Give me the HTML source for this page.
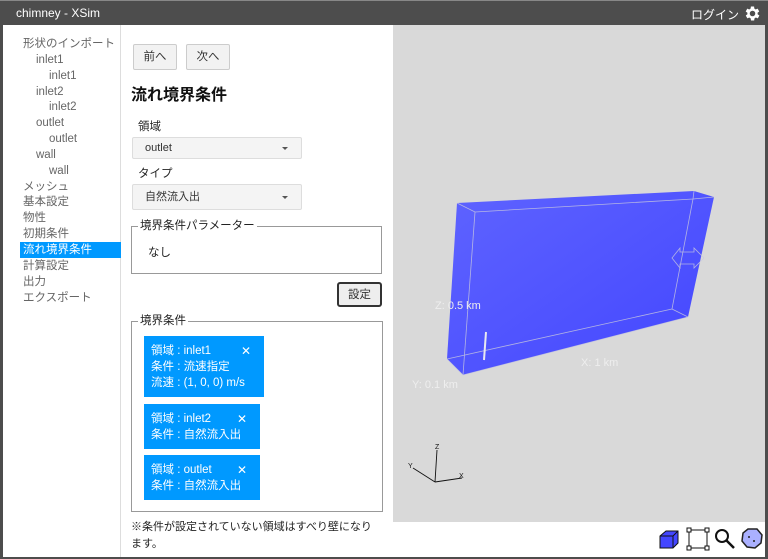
<!DOCTYPE html>
<html><head><meta charset="utf-8"><style>
*{margin:0;padding:0;box-sizing:border-box}
body{width:768px;height:559px;overflow:hidden;background:#4d4d4d;font-family:"Liberation Sans","Noto Sans CJK JP",sans-serif;position:relative}
.a{position:absolute}
#title{left:0;top:0;width:768px;height:25px;background:#4d4d4d;border-top:1px solid #888;color:#fff;font-size:12px}
#side{left:3px;top:25px;width:118px;height:532px;background:#fff;border-right:1px solid #ddd;font-size:11.5px;color:#666}
#side div{position:absolute;white-space:nowrap;height:16px;line-height:16px}
#main{left:121px;top:25px;width:272px;height:532px;background:#fff;font-size:11.5px;color:#222}
.btn{position:absolute;background:#f2f2f2;border:1px solid #ccc;border-radius:2px;text-align:center;font-size:11.5px;color:#333}
.sel{position:absolute;left:11px;width:170px;background:#f4f4f4;border:1px solid #ddd;border-radius:2px;font-size:11px;color:#333;padding-left:12px}
.sel:after{content:"";position:absolute;right:13px;top:50%;margin-top:-1px;border:3px solid transparent;border-top-color:#555}
.fs{position:absolute;border:1px solid #999}
.lg{position:absolute;left:6px;top:-9px;background:#fff;padding:0 2px;font-size:11.5px;color:#222;line-height:16px}
.card{position:absolute;left:23px;background:#0099ff;color:#fff;font-size:11.5px;line-height:16px;padding:7px 0 0 7px}
.card .x{position:absolute;right:13px;top:7px;font-size:12px}
#view{left:393px;top:25px;width:372px;height:497px;background:#d9d9d9}
#bar{left:393px;top:522px;width:372px;height:35px;background:#fff}
</style></head><body>
<div id="title" class="a"><span class="a" style="left:16px;top:5px">chimney - XSim</span>
<span class="a" style="left:691px;top:5px;font-size:12px">ログイン</span>
<svg class="a" style="left:743px;top:3px" width="19" height="19" viewBox="0 0 24 24"><path fill="#fff" d="M19.4 13a7.5 7.5 0 000-2l2.1-1.6-2-3.5-2.5 1a7 7 0 00-1.7-1L15 3.2h-4l-.4 2.7a7 7 0 00-1.7 1l-2.5-1-2 3.5L6.6 11a7.5 7.5 0 000 2l-2.1 1.6 2 3.5 2.5-1a7 7 0 001.7 1l.4 2.7h4l.4-2.7a7 7 0 001.7-1l2.5 1 2-3.5zM13 15.5a3.5 3.5 0 110-7 3.5 3.5 0 010 7z" transform="translate(-1 0)"/></svg></div>
<div id="side" class="a">
<div style="left:20px;top:11px">形状のインポート</div>
<div style="left:33px;top:27px">inlet1</div>
<div style="left:46px;top:43px">inlet1</div>
<div style="left:33px;top:59px">inlet2</div>
<div style="left:46px;top:74px">inlet2</div>
<div style="left:33px;top:90px">outlet</div>
<div style="left:46px;top:106px">outlet</div>
<div style="left:33px;top:122px">wall</div>
<div style="left:46px;top:138px">wall</div>
<div style="left:20px;top:154px">メッシュ</div>
<div style="left:20px;top:169px">基本設定</div>
<div style="left:20px;top:185px">物性</div>
<div style="left:20px;top:201px">初期条件</div>
<div style="left:17px;top:217px;width:101px;background:#0099ff;color:#fff;padding-left:3px">流れ境界条件</div>
<div style="left:20px;top:233px">計算設定</div>
<div style="left:20px;top:249px">出力</div>
<div style="left:20px;top:265px">エクスポート</div>
</div>
<div id="main" class="a">
<div class="btn" style="left:12px;top:19px;width:44px;height:26px;line-height:24px">前へ</div>
<div class="btn" style="left:65px;top:19px;width:44px;height:26px;line-height:24px">次へ</div>
<div class="a" style="left:10px;top:56px;font-size:16px;font-weight:bold;color:#111">流れ境界条件</div>
<div class="a" style="left:17px;top:93px">領域</div>
<div class="sel" style="top:112px;height:22px;line-height:20px">outlet</div>
<div class="a" style="left:17px;top:140px">タイプ</div>
<div class="sel" style="top:159px;height:26px;line-height:24px">自然流入出</div>
<div class="fs" style="left:10px;top:201px;width:251px;height:48px"><div class="lg">境界条件パラメーター</div>
<div class="a" style="left:16px;top:17px">なし</div></div>
<div class="btn" style="left:216px;top:257px;width:45px;height:25px;line-height:22px;border:2px solid #333;border-radius:3px;background:#eee">設定</div>
<div class="fs" style="left:10px;top:296px;width:252px;height:191px"><div class="lg">境界条件</div></div>
<div class="card" style="top:311px;width:120px;height:61px">領域 : inlet1<br>条件 : 流速指定<br>流速 : (1, 0, 0) m/s<span class="x">✕</span></div>
<div class="card" style="top:379px;width:116px;height:45px">領域 : inlet2<br>条件 : 自然流入出<span class="x">✕</span></div>
<div class="card" style="top:430px;width:116px;height:45px">領域 : outlet<br>条件 : 自然流入出<span class="x">✕</span></div>
<div class="a" style="left:10px;top:494px;width:250px;line-height:17px;font-size:11px">※条件が設定されていない領域はすべり壁になります。</div>
</div>
<div id="view" class="a">
<svg width="372" height="497" viewBox="393 25 372 497">
<defs><linearGradient id="g" x1="0" y1="0" x2="1" y2="1"><stop offset="0" stop-color="#5e63ff"/><stop offset="1" stop-color="#4346ff"/></linearGradient></defs>
<polygon points="457,203 694,191 714,197 688,317 463,375 447,359" fill="url(#g)"/>
<g stroke="#ccd" stroke-width="0.8" fill="none" opacity="0.8">
<polyline points="457,203 475,212 693,199 714,197"/>
<polyline points="694,191 693,199 672,309 688,317"/>
<polyline points="447,359 672,309"/>
<polyline points="475,212 463,375"/>
<polyline points="447,359 463,375 688,317"/>
<path d="M672,258 l8,-10 v4 h14 v-4 l10,10 -10,10 v-4 h-14 v4z"/>
</g>
<line x1="486" y1="332" x2="484" y2="360" stroke="#e8e8f0" stroke-width="2"/>
<g fill="#eee" font-size="11"><text x="435" y="309">Z: 0.5 km</text><text x="581" y="366">X: 1 km</text><text x="412" y="388">Y: 0.1 km</text></g>
<g stroke="#111" stroke-width="0.9" fill="none"><path d="M435,482 L437,450 M435,482 L462,478 M435,482 L413,468"/></g>
<g font-size="7" fill="#111"><text x="435" y="449">Z</text><text x="459" y="478">X</text><text x="408" y="468">Y</text></g>
</svg></div>
<div id="bar" class="a">
<svg class="a" style="left:265px;top:6px" width="22" height="22" viewBox="0 0 22 22"><path d="M2,8 L8,3 H20 V15 L15,20 H2Z" fill="#4346ff" stroke="#111"/><path d="M2,8 H15 V20 M15,8 L20,3" stroke="#111" fill="none"/></svg>
<svg class="a" style="left:293px;top:5px" width="24" height="24" viewBox="0 0 24 24"><rect x="3" y="3" width="18" height="18" fill="none" stroke="#111"/><g fill="#fff" stroke="#111"><rect x="1" y="1" width="4" height="4"/><rect x="19" y="1" width="4" height="4"/><rect x="1" y="19" width="4" height="4"/><rect x="19" y="19" width="4" height="4"/></g></svg>
<svg class="a" style="left:321px;top:6px" width="22" height="22" viewBox="0 0 22 22"><circle cx="8" cy="8" r="6" fill="none" stroke="#111" stroke-width="2"/><line x1="12" y1="12" x2="20" y2="20" stroke="#111" stroke-width="2.5"/></svg>
<svg class="a" style="left:348px;top:5px" width="22" height="22" viewBox="0 0 22 22"><polygon points="7,2 16,2 21,8 20,16 14,21 6,20 1,14 2,6" fill="#aab0ff" stroke="#222" stroke-width="1.5"/><circle cx="8" cy="10" r="1" fill="#222"/><circle cx="13" cy="14" r="1" fill="#222"/></svg>
</div>
</body></html>
